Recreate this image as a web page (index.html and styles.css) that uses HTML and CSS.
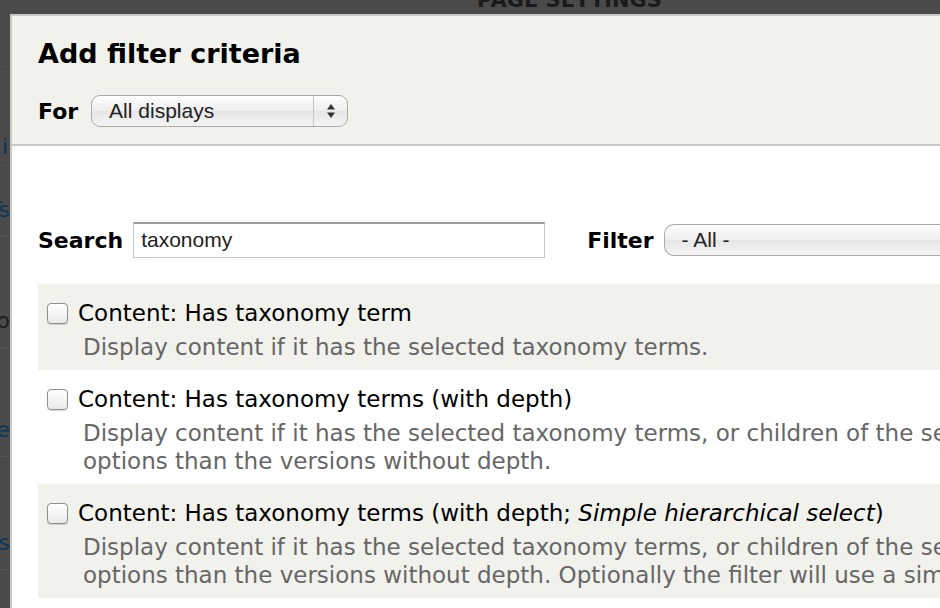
FILE: index.html
```html
<!DOCTYPE html>
<html lang="en">
<head>
<meta charset="utf-8">
<title>Add filter criteria</title>
<link rel="stylesheet" href="styles.css">
</head>
<body>
<div class="page">
  <nav class="side-nav">
    <div class="nav-item nav-1"><a class="nav-link">i</a></div>
    <div class="nav-item nav-2"><a class="nav-link">Ts</a></div>
    <div class="nav-item nav-3"><span class="nav-text">Fo</span></div>
    <div class="nav-item nav-4"><a class="nav-link">Re</a></div>
    <div class="nav-item nav-5"><a class="nav-link">Res</a></div>
  </nav>
  <header class="page-head">PAGE SETTINGS</header>
</div>

<div class="modal">
  <div class="modal-head">
    <h1 class="modal-title">Add filter criteria</h1>
    <div class="for-row">
      <span class="field-label">For</span>
      <div class="select select-for">
        <span class="select-value">All displays</span>
        <span class="select-arrows"><svg width="10" height="16" viewBox="0 0 10 16"><path d="M5 1 L9 6.5 L1 6.5 Z" fill="#333"/><path d="M1 9.5 L9 9.5 L5 15 Z" fill="#333"/></svg></span>
      </div>
    </div>
  </div>
  <div class="modal-body">
    <div class="search-row">
      <label class="field-label">Search</label>
      <div class="text-input">taxonomy</div>
      <label class="field-label filter-label">Filter</label>
      <div class="select select-filter">
        <span class="select-value">- All -</span>
      </div>
    </div>
    <div class="options">
      <div class="option shaded">
        <div class="option-title"><span class="checkbox"></span><span>Content: Has taxonomy term</span></div>
        <div class="option-desc">Display content if it has the selected taxonomy terms.</div>
      </div>
      <div class="option">
        <div class="option-title"><span class="checkbox"></span><span>Content: Has taxonomy terms (with depth)</span></div>
        <div class="option-desc">Display content if it has the selected taxonomy terms, or children of the selected terms. Due to additional complexity, this has fewer<br>options than the versions without depth.</div>
      </div>
      <div class="option shaded">
        <div class="option-title"><span class="checkbox"></span><span>Content: Has taxonomy terms (with depth; <em>Simple hierarchical select</em>)</span></div>
        <div class="option-desc">Display content if it has the selected taxonomy terms, or children of the selected terms. Due to additional complexity, this has fewer<br>options than the versions without depth. Optionally the filter will use a simple select.</div>
      </div>
    </div>
  </div>
</div>
</body>
</html>
```

FILE: styles.css
```css
html, body {
  margin: 0;
  padding: 0;
  width: 940px;
  height: 608px;
  overflow: hidden;
  background: #4a4a4a;
  font-family: "DejaVu Sans", Verdana, sans-serif;
}

.page {
  display: flex;
  height: 608px;
}

.side-nav {
  width: 10px;
  flex: none;
  display: flex;
  flex-direction: column;
  border-top: 1px solid #525252;
  margin-top: 66px;
}

.nav-item {
  height: 40px;
  display: flex;
  justify-content: flex-end;
  align-items: center;
  overflow: hidden;
  font-size: 22px;
  line-height: 26px;
  white-space: nowrap;
  border-bottom: 1px solid #525252;
}
.nav-1 { margin-top: 62px; height: 36px; justify-content: center; }
.nav-2 { margin-top: 18px; height: 52px; }
.nav-3 { margin-top: 58px; height: 52px; }
.nav-4 { margin-top: 56px; height: 52px; }
.nav-5 { margin-top: 60px; height: 52px; }

.nav-link { color: #0d3557; }
.nav-text { color: #1d1d1d; }

.page-head {
  margin: -12px 0 0 467px;
  font-size: 21px;
  font-weight: bold;
  color: #1a1a1a;
  height: 22px;
}

.modal {
  position: absolute;
  left: 10px;
  top: 14px;
  width: 1100px;
  height: 700px;
  background: #fff;
  border-left: 2px solid #c9c9c9;
  border-top: 2px solid #c9c9c9;
}

.modal-head {
  background: #f2f2ed;
  border-bottom: 2px solid #c8c8c8;
  padding: 20px 0 0 26px;
  height: 108px;
}

.modal-title {
  margin: 0;
  font-size: 27px;
  line-height: 36px;
  font-weight: bold;
  color: #000;
}

.for-row {
  display: flex;
  align-items: center;
  margin-top: 23px;
  gap: 13px;
}

.field-label {
  font-size: 22px;
  font-weight: bold;
  color: #000;
}

.select {
  display: flex;
  align-items: center;
  height: 30px;
  border: 1px solid #a9a9a9;
  border-radius: 9px;
  background: linear-gradient(#fdfdfd, #eeeeee 50%, #e6e6e6 51%, #f4f4f4);
  box-shadow: inset 0 1px 0 #fff;
  font-family: "Liberation Sans", Arial, sans-serif;
  font-size: 21px;
  color: #222;
}

.select-value {
  flex: 1;
  padding-left: 17px;
}

.select-for {
  width: 255px;
}

.select-arrows {
  width: 33px;
  height: 30px;
  border-left: 1px solid #c4c4c4;
  display: flex;
  align-items: center;
  justify-content: center;
}

.modal-body {
  padding: 76px 0 0 26px;
}

.search-row {
  display: flex;
  align-items: center;
}

.text-input {
  margin-left: 10px;
  border: 1px solid #c6c6c6;
  border-top: 2px solid #9c9c9c;
  box-sizing: border-box;
  width: 412px;
  height: 36px;
  padding-left: 7px;
  font-family: "Liberation Sans", Arial, sans-serif;
  font-size: 21px;
  line-height: 32px;
  color: #222;
}

.filter-label {
  margin-left: 42px;
}

.select-filter {
  margin-left: 10px;
  width: 400px;
  border-radius: 10px 0 0 10px;
  border-right: 0;
}

.options {
  margin-top: 26px;
}

.option {
  padding: 15px 0 9px 9px;
}

.option.shaded {
  background: #f2f2ed;
}

.option-title {
  display: flex;
  align-items: center;
  gap: 10px;
  font-size: 23px;
  line-height: 28px;
  color: #000;
  white-space: nowrap;
}

.checkbox {
  width: 19px;
  height: 19px;
  border: 1px solid #8f8f8f;
  border-radius: 4px;
  background: linear-gradient(#ffffff, #eaeaea);
  box-shadow: 0 1px 1px rgba(0,0,0,0.15);
  flex: none;
}

.option-desc {
  margin-left: 36px;
  margin-top: 6px;
  font-size: 23px;
  line-height: 28px;
  color: #666;
  white-space: nowrap;
}
```
